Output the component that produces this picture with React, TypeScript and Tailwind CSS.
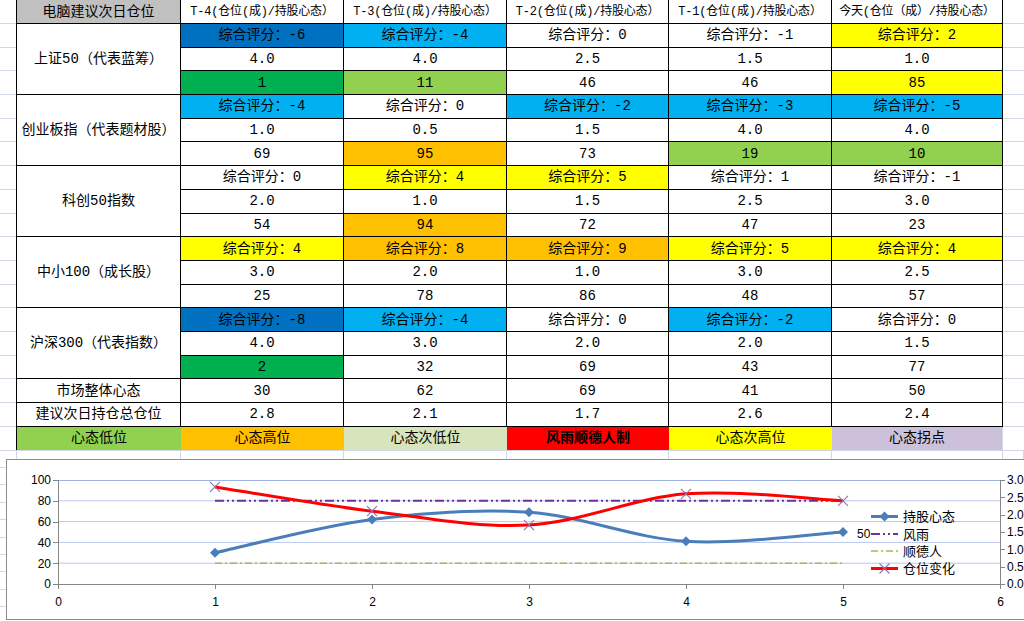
import React from "react";

const BG: Record<string, string> = {
  w: "bg-white",
  db: "bg-[#0070c0]",
  lb: "bg-[#00b0f0]",
  y: "bg-[#ffff00]",
  o: "bg-[#ffc000]",
  g: "bg-[#00b050]",
  lg: "bg-[#92d050]",
};

type Cell = [string, string];

const groups: { label: string; score: Cell[]; pos: string[]; mood: Cell[] }[] = [
  {
    label: "上证50（代表蓝筹）",
    score: [["-6", "db"], ["-4", "lb"], ["0", "w"], ["-1", "w"], ["2", "y"]],
    pos: ["4.0", "4.0", "2.5", "1.5", "1.0"],
    mood: [["1", "g"], ["11", "lg"], ["46", "w"], ["46", "w"], ["85", "y"]],
  },
  {
    label: "创业板指（代表题材股）",
    score: [["-4", "lb"], ["0", "w"], ["-2", "lb"], ["-3", "lb"], ["-5", "lb"]],
    pos: ["1.0", "0.5", "1.5", "4.0", "4.0"],
    mood: [["69", "w"], ["95", "o"], ["73", "w"], ["19", "lg"], ["10", "lg"]],
  },
  {
    label: "科创50指数",
    score: [["0", "w"], ["4", "y"], ["5", "y"], ["1", "w"], ["-1", "w"]],
    pos: ["2.0", "1.0", "1.5", "2.5", "3.0"],
    mood: [["54", "w"], ["94", "o"], ["72", "w"], ["47", "w"], ["23", "w"]],
  },
  {
    label: "中小100（成长股）",
    score: [["4", "y"], ["8", "o"], ["9", "o"], ["5", "y"], ["4", "y"]],
    pos: ["3.0", "2.0", "1.0", "3.0", "2.5"],
    mood: [["25", "w"], ["78", "w"], ["86", "w"], ["48", "w"], ["57", "w"]],
  },
  {
    label: "沪深300（代表指数）",
    score: [["-8", "db"], ["-4", "lb"], ["0", "w"], ["-2", "lb"], ["0", "w"]],
    pos: ["4.0", "3.0", "2.0", "2.0", "1.5"],
    mood: [["2", "g"], ["32", "w"], ["69", "w"], ["43", "w"], ["77", "w"]],
  },
];

const headers = [
  "T-4(仓位(成)/持股心态）",
  "T-3(仓位(成)/持股心态）",
  "T-2(仓位(成)/持股心态）",
  "T-1(仓位(成)/持股心态）",
  "今天(仓位（成）/持股心态）",
];

const legend: { text: string; cls: string }[] = [
  { text: "心态低位", cls: "bg-[#92d050] border-l border-l-black" },
  { text: "心态高位", cls: "bg-[#ffc000]" },
  { text: "心态次低位", cls: "bg-[#d8e4bc]" },
  { text: "风雨顺德人制", cls: "bg-[#ff0000] font-bold" },
  { text: "心态次高位", cls: "bg-[#ffff00]" },
  { text: "心态拐点", cls: "bg-[#ccc0da] border-r border-r-[#d0d7e5]" },
];

const legendW = ["w-[165px]", "w-[163px]", "w-[163px]", "w-[162px]", "w-[163px]", "w-[171px]"];

const cellCore =
  "flex items-center justify-center border-r border-b border-black leading-none whitespace-nowrap text-black overflow-hidden";
const cellBase = cellCore + " text-[14px]";
const headBase = cellCore + " text-[12px] tracking-[-0.2px]";

const gutterRows = [
  "h-[24px]",
  ...Array.from({ length: 17 }, () => "h-[23.7px]"),
  "h-[24px]",
];

function Gutter({ className }: { className: string }) {
  return (
    <div className={"flex flex-col " + className}>
      {gutterRows.map((h, i) => (
        <div key={i} className={h + " border-b border-[#d0d7e5]"} />
      ))}
    </div>
  );
}

const belowW = ["w-[17px]", "w-[164px]", "w-[163px]", "w-[163px]", "w-[162px]", "w-[163px]", "w-[171px]", "flex-1"];

// chart helpers
const X = (i: number) => 58 + i * 157;
const YL = (v: number) => 584 - v * 1.04;
const YR = (v: number) => 584 - (v / 3) * 104;
const moodV = [30, 62, 69, 41, 50];
const posV = [2.8, 2.1, 1.7, 2.6, 2.4];

function smooth(pts: [number, number][]) {
  let d = `M${pts[0][0]},${pts[0][1]}`;
  for (let i = 0; i < pts.length - 1; i++) {
    const p0 = pts[i - 1] || pts[i];
    const p1 = pts[i];
    const p2 = pts[i + 1];
    const p3 = pts[i + 2] || p2;
    const c1x = p1[0] + (p2[0] - p0[0]) / 6;
    const c1y = p1[1] + (p2[1] - p0[1]) / 6;
    const c2x = p2[0] - (p3[0] - p1[0]) / 6;
    const c2y = p2[1] - (p3[1] - p1[1]) / 6;
    d += ` C${c1x.toFixed(2)},${c1y.toFixed(2)} ${c2x.toFixed(2)},${c2y.toFixed(2)} ${p2[0]},${p2[1].toFixed(2)}`;
  }
  return d;
}

function Diamond({ x, y, r = 5 }: { x: number; y: number; r?: number }) {
  return <polygon points={`${x},${y - r} ${x + r},${y} ${x},${y + r} ${x - r},${y}`} fill="#4a7ebb" />;
}

function Cross({ x, y, r = 5 }: { x: number; y: number; r?: number }) {
  return (
    <g stroke="#8e6fb0" strokeWidth={1.1}>
      <line x1={x - r} y1={y - r} x2={x + r} y2={y + r} />
      <line x1={x - r} y1={y + r} x2={x + r} y2={y - r} />
    </g>
  );
}

function Chart() {
  const bluePts = moodV.map((v, i) => [X(i + 1), YL(v)] as [number, number]);
  const redPts = posV.map((v, i) => [X(i + 1), YR(v)] as [number, number]);
  const axisFont = { fontFamily: "'Liberation Sans', Arial, sans-serif", fontSize: 12 };
  const cjkFont = { fontFamily: "'Noto Sans CJK SC', sans-serif", fontSize: 13 };
  return (
    <div className="absolute left-[6px] top-[459px] w-[1018px] h-[162px] bg-white">
      <svg width="1018" height="162" viewBox="6 459 1018 162" className="block">
        <rect x={6.5} y={459.5} width={1040} height={160} fill="white" stroke="#8c8c8c" />
        {[80, 60, 40, 20].map((v) => (
          <line key={v} x1={58} x2={1000} y1={YL(v)} y2={YL(v)} stroke="#b9c8ec" strokeWidth={1} />
        ))}
        <line x1={58} x2={1000} y1={480.5} y2={480.5} stroke="#9fb4e4" strokeWidth={1} />
        <line x1={58.5} x2={58.5} y1={480} y2={584} stroke="#868686" />
        <line x1={1000.5} x2={1000.5} y1={480} y2={584} stroke="#868686" />
        <line x1={58} x2={1001} y1={584.5} y2={584.5} stroke="#868686" />
        {[0, 1, 2, 3, 4, 5, 6].map((i) => (
          <line key={i} x1={X(i) + 0.5} x2={X(i) + 0.5} y1={584} y2={589} stroke="#868686" />
        ))}
        {[0, 20, 40, 60, 80, 100].map((v) => (
          <line key={v} x1={53} x2={58} y1={Math.round(YL(v)) + 0.5} y2={Math.round(YL(v)) + 0.5} stroke="#868686" />
        ))}
        {[0, 0.5, 1, 1.5, 2, 2.5, 3].map((v) => (
          <line key={v} x1={1000} x2={1005} y1={Math.round(YR(v)) + 0.5} y2={Math.round(YR(v)) + 0.5} stroke="#868686" />
        ))}
        {[0, 20, 40, 60, 80, 100].map((v) => (
          <text key={v} x={51} y={YL(v) + 4.3} textAnchor="end" fill="#000" style={axisFont}>
            {v}
          </text>
        ))}
        {[0, 1, 2, 3, 4, 5, 6].map((i) => (
          <text key={i} x={X(i) + 0.5} y={606} textAnchor="middle" fill="#000" style={axisFont}>
            {i}
          </text>
        ))}
        {[0, 0.5, 1, 1.5, 2, 2.5, 3].map((v) => (
          <text key={v} x={1007} y={YR(v) + 4.3} fill="#000" style={axisFont}>
            {v.toFixed(1)}
          </text>
        ))}
        <line x1={X(1)} x2={X(5)} y1={YL(80)} y2={YL(80)} stroke="#7030a0" strokeWidth={2} strokeDasharray="9 3 2 3 2 3" />
        <line x1={X(1)} x2={X(5)} y1={YL(20)} y2={YL(20)} stroke="#9bbb59" strokeWidth={1.5} strokeDasharray="7 3 2 3" />
        <path d={smooth(bluePts)} fill="none" stroke="#4a7ebb" strokeWidth={3} />
        {bluePts.map((p, i) => (
          <Diamond key={i} x={p[0]} y={p[1]} />
        ))}
        <path d={smooth(redPts)} fill="none" stroke="#ff0000" strokeWidth={3} />
        {redPts.map((p, i) => (
          <Cross key={i} x={p[0]} y={p[1]} />
        ))}
        <text x={857} y={537.5} fill="#000" style={axisFont}>
          50
        </text>
        <line x1={871} x2={898} y1={516.5} y2={516.5} stroke="#4a7ebb" strokeWidth={3} />
        <Diamond x={884.5} y={516.5} />
        <text x={903} y={521} fill="#000" style={cjkFont}>持股心态</text>
        <line x1={871} x2={898} y1={534} y2={534} stroke="#7030a0" strokeWidth={2} strokeDasharray="9 3 2 3 2 3" />
        <text x={903} y={538.5} fill="#000" style={cjkFont}>风雨</text>
        <line x1={871} x2={898} y1={551} y2={551} stroke="#9bbb59" strokeWidth={1.5} strokeDasharray="7 3 2 3" />
        <text x={903} y={555.5} fill="#000" style={cjkFont}>顺德人</text>
        <line x1={871} x2={898} y1={568.5} y2={568.5} stroke="#ff0000" strokeWidth={3} />
        <Cross x={884.5} y={568.5} />
        <text x={903} y={573} fill="#000" style={cjkFont}>仓位变化</text>
      </svg>
    </div>
  );
}

export default function App() {
  const font = "font-['Liberation_Mono','Noto_Sans_CJK_SC',monospace]";
  return (
    <div className={"relative w-[1024px] h-[621px] overflow-hidden bg-white text-black " + font}>
      <div className="flex">
        <Gutter className="w-[16px] shrink-0" />
        <div className="flex flex-col shrink-0">
          <div className="grid grid-cols-[165px_163px_163px_162px_163px_171px] grid-rows-[24px_repeat(17,23.7px)]">
            <div className={cellBase + " border-l bg-[#c0c0c0]"}>电脑建议次日仓位</div>
            {headers.map((h) => (
              <div key={h} className={headBase + " bg-white"}>
                {h}
              </div>
            ))}
            {groups.map((g) => (
              <React.Fragment key={g.label}>
                <div className={cellBase + " border-l row-span-3 bg-white"}>{g.label}</div>
                {g.score.map(([v, c], i) => (
                  <div key={"s" + i} className={cellBase + " " + BG[c]}>
                    综合评分：{v}
                  </div>
                ))}
                {g.pos.map((v, i) => (
                  <div key={"p" + i} className={cellBase + " bg-white"}>
                    {v}
                  </div>
                ))}
                {g.mood.map(([v, c], i) => (
                  <div key={"m" + i} className={cellBase + " " + BG[c]}>
                    {v}
                  </div>
                ))}
              </React.Fragment>
            ))}
            <div className={cellBase + " border-l bg-white"}>市场整体心态</div>
            {["30", "62", "69", "41", "50"].map((v, i) => (
              <div key={"t" + i} className={cellBase + " bg-white"}>
                {v}
              </div>
            ))}
            <div className={cellBase + " border-l bg-white"}>建议次日持仓总仓位</div>
            {["2.8", "2.1", "1.7", "2.6", "2.4"].map((v, i) => (
              <div key={"q" + i} className={cellBase + " bg-white"}>
                {v}
              </div>
            ))}
          </div>
          <div className="flex h-[24px] border-b border-b-[#d0d7e5]">
            {legend.map((l, i) => (
              <div
                key={l.text}
                className={
                  "flex items-center justify-center text-[14px] leading-none whitespace-nowrap " +
                  legendW[i] +
                  " " +
                  l.cls
                }
              >
                {l.text}
              </div>
            ))}
          </div>
        </div>
        <Gutter className="flex-1" />
      </div>
      <div className="flex flex-col">
        {Array.from({ length: 10 }).map((_, r) => (
          <div key={r} className="flex h-[17.4px]">
            {belowW.map((w, c) => (
              <div key={c} className={w + " shrink-0 border-b border-r border-[#d0d7e5]"} />
            ))}
          </div>
        ))}
      </div>
      <Chart />
    </div>
  );
}
